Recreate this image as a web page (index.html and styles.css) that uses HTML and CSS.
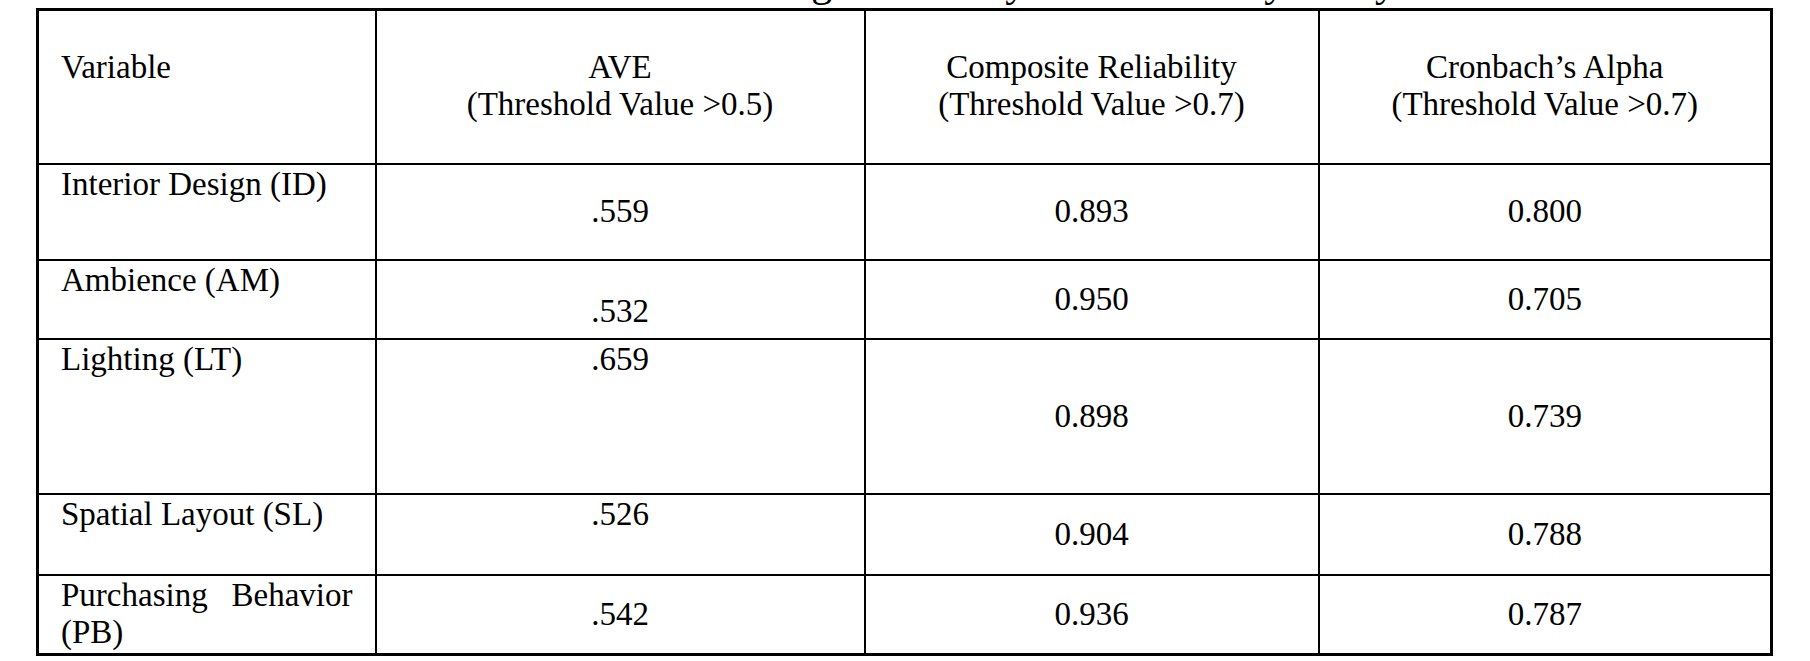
FILE: index.html
```html
<!DOCTYPE html>
<html lang="en">
<head>
  <meta charset="UTF-8">
  <meta name="viewport" content="width=device-width, initial-scale=1.0">
  <title>Convergent Validity and Reliability</title>
  <link rel="stylesheet" href="styles.css">
</head>
<body>
  <div class="page">
    <!-- caption sits above the crop, only its descenders show -->
    <p class="caption">Table 3: Convergent Validity and Reliability Analysis</p>

    <table class="stats">
      <colgroup>
        <col class="c-var">
        <col class="c-ave">
        <col class="c-cr">
        <col class="c-alpha">
      </colgroup>
      <thead>
        <tr class="r-head">
          <th class="var">Variable</th>
          <th>AVE<br>(Threshold Value &gt;0.5)</th>
          <th>Composite Reliability<br>(Threshold Value &gt;0.7)</th>
          <th>Cronbach’s Alpha<br>(Threshold Value &gt;0.7)</th>
        </tr>
      </thead>
      <tbody>
        <tr class="r-id">
          <td class="var">Interior Design (ID)</td>
          <td>.559</td>
          <td>0.893</td>
          <td>0.800</td>
        </tr>
        <tr class="r-am">
          <td class="var">Ambience (AM)</td>
          <td class="at-bottom">.532</td>
          <td>0.950</td>
          <td>0.705</td>
        </tr>
        <tr class="r-lt">
          <td class="var">Lighting (LT)</td>
          <td class="at-top">.659</td>
          <td>0.898</td>
          <td>0.739</td>
        </tr>
        <tr class="r-sl">
          <td class="var">Spatial Layout (SL)</td>
          <td class="at-top">.526</td>
          <td>0.904</td>
          <td>0.788</td>
        </tr>
        <tr class="r-pb">
          <td class="var">Purchasing Behavior (PB)</td>
          <td>.542</td>
          <td>0.936</td>
          <td>0.787</td>
        </tr>
      </tbody>
    </table>
  </div>
</body>
</html>
```

FILE: styles.css
```css
/* Table of validity / reliability values */
body {
  margin: 0;
  background: #fff;
  color: #000;
  font-family: "Liberation Serif", "Times New Roman", serif;
  font-size: 33px;
}

.page {
  padding-left: 36px;
}

.caption {
  margin: -42px 0 2px 0;
  padding-left: 506px;
  font-size: 42px;
  line-height: 48px;
  white-space: nowrap;
}

.stats {
  border-collapse: collapse;
  table-layout: fixed;
  border: 3px solid #000;
}

.c-var { width: 338px; }
.c-ave { width: 489px; }
.c-cr { width: 454px; }
.c-alpha { width: 453px; }

.stats th,
.stats td {
  border: 2px solid #000;
  line-height: 37px;
}

.stats th {
  font-weight: normal;
  text-align: center;
  vertical-align: top;
  padding: 38px 8px 0;
}

.stats td {
  text-align: center;
  vertical-align: middle;
  padding: 0 8px;
}

.stats .var {
  text-align: justify;
  vertical-align: top;
  padding: 1px 22px 0 22px;
}

.stats th.var {
  text-align: left;
  padding-top: 38px;
}

.stats .at-top {
  vertical-align: top;
  padding-top: 1px;
}

.stats .at-bottom {
  vertical-align: bottom;
  padding-bottom: 8px;
}

.r-head { height: 154px; }
.r-id { height: 96px; }
.r-am { height: 79px; }
.r-lt { height: 155px; }
.r-sl { height: 81px; }
.r-pb { height: 80px; }
```
